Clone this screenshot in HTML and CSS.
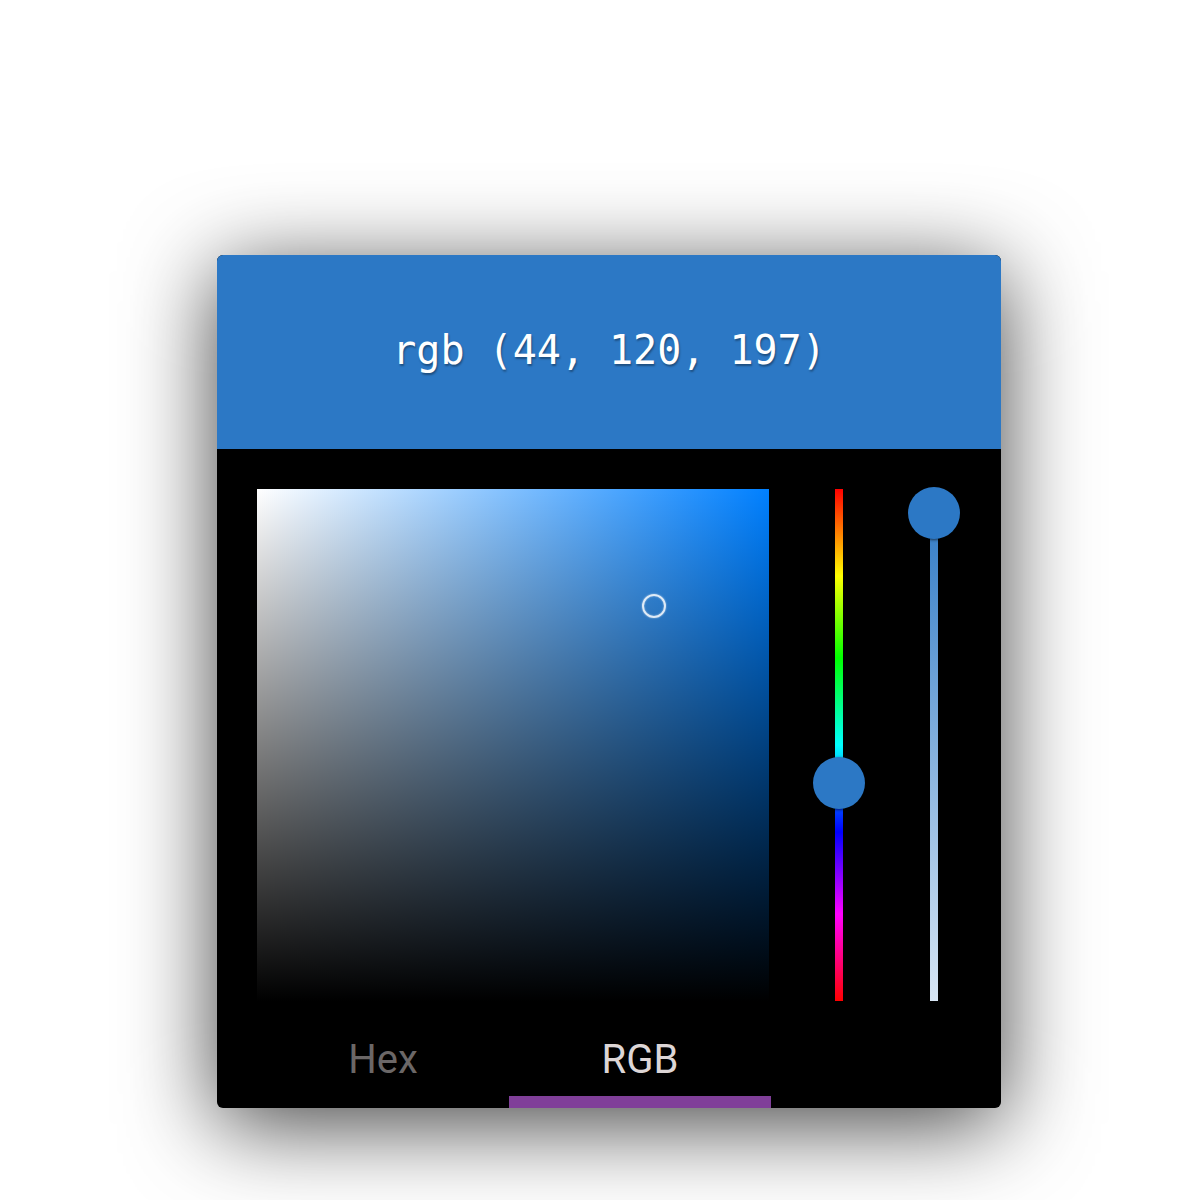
FILE: index.html
```html
<!DOCTYPE html>
<html lang="en">
<head>
    <meta charset="UTF-8">
    <meta name="viewport" content="width=device-width, initial-scale=1.0">
    <title>Color Picker</title>
    <link rel="stylesheet" href="styles.css">
</head>
<body>
    <div class="picker">
        <div class="picker-header">
            <span class="picker-value">rgb (44, 120, 197)</span>
        </div>

        <div class="picker-body">
            <div class="saturation">
                <div class="saturation-white"></div>
                <div class="saturation-black"></div>
                <div class="saturation-cursor" style="left: 397px; top: 117px;"></div>
            </div>

            <div class="slider hue">
                <div class="slider-track"></div>
                <div class="slider-thumb" style="top: 268px;"></div>
            </div>

            <div class="slider alpha">
                <div class="slider-track"></div>
                <div class="slider-thumb" style="top: -2px;"></div>
            </div>
        </div>

        <div class="picker-tabs">
            <div class="tab">Hex</div>
            <div class="tab active">RGB</div>
        </div>
    </div>
</body>
</html>
```

FILE: styles.css
```css
body {
    margin: 0;
    padding: 255px 0 92px;
    background: #fff;
    font-family: Roboto, "Noto Sans", sans-serif;
}
.picker {
    width: 784px;
    margin-left: 217px;
    background: #000;
    border-radius: 6px;
    overflow: hidden;
    box-shadow: 0 16px 90px rgba(0, 0, 0, 0.75);
}
.picker-header {
    height: 194px;
    background: #2c78c5;
    display: flex;
    align-items: center;
    justify-content: center;
    box-shadow: 0 1px 2px rgba(0, 0, 0, 0.5);
    position: relative;
}
.picker-value {
    font-family: "DejaVu Sans Mono", monospace;
    font-size: 40px;
    color: #fff;
    text-shadow: 1px 2px 2px rgba(0, 0, 0, 0.35);
    margin-top: -4px;
}
.picker-body {
    display: flex;
    padding: 40px 0 0 40px;
}

/* saturation / value square for hue 210 */
.saturation {
    position: relative;
    width: 512px;
    height: 512px;
    background: #0080ff;
}
.saturation-white,
.saturation-black {
    position: absolute;
    inset: 0;
}
.saturation-white {
    background: linear-gradient(to right, #fff, rgba(255, 255, 255, 0));
}
.saturation-black {
    background: linear-gradient(to bottom, rgba(0, 0, 0, 0), #000);
}
.saturation-cursor {
    position: absolute;
    width: 20px;
    height: 20px;
    margin: -12px 0 0 -12px;
    border: 2px solid rgba(255, 255, 255, 0.85);
    border-radius: 50%;
    box-shadow: 0 0 2px rgba(255, 255, 255, 0.6), inset 0 0 2px rgba(255, 255, 255, 0.5);
}

.slider {
    position: relative;
    width: 52px;
    height: 512px;
    display: flex;
    justify-content: center;
}
.slider.hue {
    margin-left: 44px;
}
.slider.alpha {
    margin-left: 43px;
}
.slider-track {
    width: 8px;
    height: 100%;
}
.hue .slider-track {
    background: linear-gradient(to bottom, #f00, #ff0 17%, #0f0 33%, #0ff 50%, #00f 67%, #f0f 83%, #f00);
}
.alpha .slider-track {
    background: linear-gradient(to bottom, #2c78c5, #d8e6f4);
}
.slider-thumb {
    position: absolute;
    left: 0;
    width: 52px;
    height: 52px;
    border-radius: 50%;
    background: #2c78c5;
    box-shadow: 0 1px 3px rgba(0, 0, 0, 0.6);
}

.picker-tabs {
    display: flex;
    padding-left: 30px;
}
.tab {
    width: 262px;
    padding: 37px 0 14px;
    line-height: 44px;
    font-size: 40px;
    text-align: center;
    color: #6b6767;
    border-bottom: 12px solid transparent;
}
.tab:first-child {
    padding-left: 10px;
    width: 252px;
}
.tab.active {
    color: #ddd6d6;
    border-bottom-color: #803f99;
}
```
